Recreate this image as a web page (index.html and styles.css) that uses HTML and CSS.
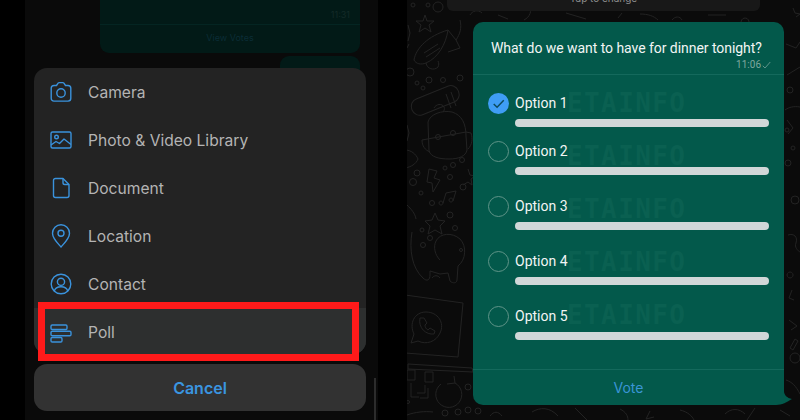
FILE: index.html
```html
<!DOCTYPE html>
<html lang="en">
<head>
    <meta charset="UTF-8">
    <meta name="viewport" content="width=device-width, initial-scale=1.0">
    <title>WhatsApp Polls</title>
    <link rel="stylesheet" href="styles.css">
</head>
<body>
    <div class="screen screen-left">
        <div class="dim-bubble">
            <div class="dim-time">11:31</div>
            <div class="dim-votes">View Votes</div>
        </div>
        <div class="dim-bubble-small"></div>

        <div class="sheet">
            <div class="sheet-row">
                <svg class="row-icon" viewBox="0 0 24 24"><path d="M5 5.500h2.500l1.600-2.300c.3-.4.6-.6 1.100-.6h3.600c.5 0 .8.2 1.100.6l1.600 2.300H19c1.700 0 2.800 1.100 2.800 2.800v10c0 1.700-1.100 2.800-2.800 2.800H5c-1.700 0-2.800-1.100-2.800-2.800v-10C2.200 6.600 3.300 5.500 5 5.500z"/><circle cx="12" cy="13" r="4.200"/></svg>
                <span>Camera</span>
            </div>
            <div class="sheet-row">
                <svg class="row-icon" viewBox="0 0 24 24"><rect x="2" y="4" width="20" height="16" rx="1.500"/><circle cx="7.500" cy="9" r="1.800"/><path d="M2 17l5-3.500 3.500 2 4.500-4.500 7 5.500"/></svg>
                <span>Photo &amp; Video Library</span>
            </div>
            <div class="sheet-row">
                <svg class="row-icon" viewBox="0 0 24 24"><path d="M6.500 2.500h7.500l6 6v11c0 1.300-.8 2-2 2H6.500c-1.200 0-2-.7-2-2v-15c0-1.300.8-2 2-2z"/><path d="M14 2.500v4.200c0 1.200.6 1.800 1.800 1.800H20"/></svg>
                <span>Document</span>
            </div>
            <div class="sheet-row">
                <svg class="row-icon" viewBox="0 0 24 24"><path d="M12 23c-1.200-1.700-8.500-8-8.500-13.800a8.500 8.500 0 0 1 17 0C20.500 15 13.200 21.300 12 23z"/><circle cx="12" cy="9.200" r="3"/></svg>
                <span>Location</span>
            </div>
            <div class="sheet-row">
                <svg class="row-icon" viewBox="0 0 24 24"><circle cx="12" cy="12" r="9.800"/><circle cx="12" cy="9.800" r="3.600"/><path d="M5.300 19c.8-3 3.500-4.200 6.700-4.200s5.900 1.200 6.700 4.200"/></svg>
                <span>Contact</span>
            </div>
            <div class="sheet-row sheet-row-poll">
                <svg class="row-icon" viewBox="0 0 24 24"><rect x="2" y="4" width="16" height="4.500" rx="1.200"/><rect x="2" y="10.200" width="20" height="4.500" rx="1.200"/><rect x="2" y="16.500" width="11" height="4.500" rx="1.200"/></svg>
                <span>Poll</span>
            </div>
        </div>
        <div class="poll-highlight"></div>

        <div class="cancel">Cancel</div>
        <div class="scroll-thumb"></div>
    </div>

    <div class="screen screen-right">
        <svg class="wallpaper" viewBox="407 0 393 420">
            <!-- left column, top: star, cap, dots -->
            <path d="M425 15l2 6 7 0-5 4 2 7-6-4-6 4 2-7-5-4 7 0z"/>
            <circle cx="438" cy="7" r="5"/><circle cx="413" cy="5" r="2"/><circle cx="428" cy="5" r="2"/>
            <path d="M414 60c2-12 14-24 34-30-2 14-10 28-22 33-5 2-10 1-12-3z"/>
            <path d="M424 53l14-9M426 57l14-9"/>
            <path d="M426 63c1 6 8 8 12 4 1-2 1-4 0-6"/>
            <path d="M448 30l8 10 4 8-12 4M460 20c2 8 0 14-4 20"/>
            <circle cx="410" cy="72" r="4"/><circle cx="417" cy="83" r="2"/><circle cx="429" cy="80" r="3"/>
            <circle cx="423" cy="88" r="2"/><circle cx="443" cy="80" r="2.500"/><circle cx="460" cy="78" r="3"/>
            <path d="M408 25l2 8-2 8M409 44l-2 4"/>
            <!-- rolled mat and backpack -->
            <rect x="410" y="92" width="50" height="17" rx="8" transform="rotate(-22 435 100)"/>
            <path d="M451 92l5 14M446 94l5 14"/>
            <path d="M428 122c2-8 14-12 24-10 10 3 14 12 14 24l1 14c-1 6-8 9-18 9-10 0-18-2-20-8z"/>
            <path d="M422 140l44-8 5 1c2 6 1 12-3 16M422 140c0 6 3 10 8 12"/>
            <circle cx="438" cy="137" r="2.500"/><circle cx="453" cy="133" r="2.500"/>
            <path d="M434 108c2-4 8-5 10-1 1 2 0 4-1 5"/>
            <path d="M405 150c6 0 11 4 13 9-2 5-7 8-13 9M407 125l2 8-2 8"/>
            <!-- bolt, note, dots -->
            <path d="M429 169l8 2-3 7 6 2-7 12-1-9-5-1z"/>
            <path d="M443 203l3-10 10-2-3 10M443 203a2 2 0 1 0 0 .1M453 200a2 2 0 1 0 0 .1"/>
            <circle cx="417" cy="173" r="3"/><circle cx="413" cy="182" r="3.500"/><circle cx="421" cy="193" r="2"/>
            <circle cx="432" cy="203" r="2.500"/><circle cx="445" cy="168" r="2"/><circle cx="453" cy="165" r="2.500"/>
            <circle cx="450" cy="177" r="2.500"/><circle cx="462" cy="160" r="2.500"/><circle cx="463" cy="187" r="3"/>
            <path d="M468 169l2 6 5 1-4 3 1 6-4-3-5 3"/>
            <path d="M407 205c4 4 8 8 9 14"/>
            <!-- star, elephant -->
            <path d="M435 213l3 7 7 1-5 5 2 8-7-4-7 4 2-8-5-5 7-1z"/>
            <circle cx="450" cy="215" r="3"/><circle cx="455" cy="228" r="2.500"/><circle cx="422" cy="230" r="2"/>
            <circle cx="430" cy="238" r="2.500"/><circle cx="423" cy="245" r="2.500"/>
            <path d="M412 232c-3 18 0 36 11 46 4 4 7 2 7-3l0-4 10 3 8-1 2 8c3 3 7 2 7-1l1-14c8-6 9-20 2-27-8-7-20-6-24 2-3 6-1 14 4 19"/>
            <circle cx="461" cy="250" r="1.500"/>
            <path d="M432 278c2-3 6-3 8 0"/>
            <!-- laptop with chat icon -->
            <path d="M405 295l58 8-5 54-53-4"/>
            <path d="M408 364l64 4 1 4-65-3z"/>
            <path d="M411 343l3-9c-5-10 0-22 12-22 12 0 19 11 14 21-4 9-14 12-22 8z"/>
            <path d="M420 318c-2 10 6 17 14 16l1-3-5-3-2 2c-2-1-3-3-3-5l2-2-3-5z"/>
            <!-- squares, refresh, bottom edge -->
            <path d="M407 370h8v10h-8zM425 372h8v10h-8zM411 383v14h8M417 393h8v-8M428 388v10h-8"/>
            <path d="M441 384a13 13 0 1 0 14-1l-1-7m1 7l-8 1"/>
            <circle cx="445" cy="413" r="3"/><circle cx="458" cy="412" r="3"/><circle cx="468" cy="410" r="3"/>
            <circle cx="478" cy="411" r="3"/><circle cx="468" cy="387" r="3"/><circle cx="408" cy="402" r="1.500"/>
            <path d="M407 415c8-3 18-4 26-3"/>
            <path d="M490 416c4-5 8-5 12 0M532 412c8-5 18-5 26 4M575 408l12 12M620 409c6 3 8 7 8 11M650 411l-4 8 8-2M680 410c8 2 12 6 14 10M725 414c6-6 14-6 20 0M755 408l-8 12"/>
            <!-- above the bubble -->
            <path d="M470 15c2-4 8-6 12-2M498 15l10 4M530 5c2 6 0 12-6 15M566 13l20 6M618 18l4-5M640 14c8 0 14 2 18 6M672 20c3-4 8-4 10 0M708 15h18M745 18a4 4 0 1 0 .1 0"/>
            <!-- right column -->
            <path d="M793 8l2 5 5 1-4 3M786 44l10 4 4-6M787 75l13-8M785 110c4-3 9-4 15-3M787 120l6 8-5 6"/>
            <circle cx="790" cy="90" r="3"/><circle cx="787" cy="130" r="2"/><circle cx="788" cy="163" r="3"/>
            <circle cx="795" cy="200" r="4"/><circle cx="793" cy="148" r="2"/>
            <path d="M788 235c6-2 10 2 8 8-2 4 2 8 4 9M790 272a3 3 0 1 0 .1 0M792 290l-3 8 5 2M789 320l8 6-6 4"/>
            <path d="M790 348l5-9 3 2-5 9z"/><circle cx="795" cy="358" r="5"/><path d="M786 380c6 2 10 6 14 14M780 410l10 6"/>
        </svg>

        <div class="tap-strip"><span>Tap to change</span></div>

        <div class="poll-bubble">
            <div class="poll-head">
                <div class="question">What do we want to have for dinner tonight?</div>
                <div class="sent">
                    <span>11:06</span>
                    <svg class="sent-check" viewBox="0 0 12 10"><path d="M1 6l3 3 7-8"/></svg>
                </div>
            </div>
            <div class="marks">
                <span class="mark">ETAINFO</span>
                <span class="mark">ETAINFO</span>
                <span class="mark">ETAINFO</span>
                <span class="mark">ETAINFO</span>
                <span class="mark">ETAINFO</span>
            </div>
            <div class="options">
                <div class="option option-first">
                    <span class="radio radio-on">
                        <svg viewBox="0 0 22 22"><path d="M6 11.500l3.500 3.500 7-7.500"/></svg>
                    </span>
                    <div class="option-body">
                        <div class="option-label">Option 1</div>
                        <div class="option-bar"></div>
                    </div>
                </div>
                <div class="option option-tight">
                    <span class="radio"></span>
                    <div class="option-body">
                        <div class="option-label">Option 2</div>
                        <div class="option-bar"></div>
                    </div>
                </div>
                <div class="option">
                    <span class="radio"></span>
                    <div class="option-body">
                        <div class="option-label">Option 3</div>
                        <div class="option-bar"></div>
                    </div>
                </div>
                <div class="option">
                    <span class="radio"></span>
                    <div class="option-body">
                        <div class="option-label">Option 4</div>
                        <div class="option-bar"></div>
                    </div>
                </div>
                <div class="option">
                    <span class="radio"></span>
                    <div class="option-body">
                        <div class="option-label">Option 5</div>
                        <div class="option-bar"></div>
                    </div>
                </div>
            </div>
            <div class="vote">Vote</div>
            <svg class="bubble-tail" viewBox="0 0 20 20"><path d="M0 0h12v6c0 4 3 7 8 8-5 3-10 6-16 6H0z"/></svg>
        </div>
    </div>
</body>
</html>
```

FILE: styles.css
```css
* {
    box-sizing: border-box;
}
html, body {
    margin: 0;
    height: 100%;
}
body {
    width: 800px;
    height: 420px;
    overflow: hidden;
    display: flex;
    background-color: #000;
    font-family: Inter, "Liberation Sans", sans-serif;
}
.screen {
    position: relative;
    height: 420px;
    overflow: hidden;
}

/* left phone */
.screen-left {
    width: 353px;
    margin-left: 25px;
    background-color: #0a0a0a;
    padding-left: 9px;
}
.dim-bubble {
    width: 260px;
    height: 53px;
    margin-left: 66px;
    padding: 9px 10px 0;
    background-color: #021a17;
    border-radius: 0 0 9px 9px;
    color: #0c2c31;
    font-size: 9px;
}
.dim-time {
    text-align: right;
    color: #142a28;
    height: 15px;
}
.dim-votes {
    border-top: 1px solid #042522;
    margin: 0 -10px;
    padding-top: 7px;
    text-align: center;
    color: #0b2d36;
}
.dim-bubble-small {
    width: 80px;
    height: 20px;
    margin: 3px 0 -8px 246px;
    background-color: #021a17;
    border-radius: 9px 9px 0 0;
}
.sheet {
    width: 332px;
    height: 286px;
    background-color: #232323;
    border-radius: 13px;
    overflow: hidden;
    position: relative;
}
.sheet-row {
    height: 48.100px;
    display: flex;
    align-items: center;
    padding-left: 15px;
    color: #b4b4b4;
    font-size: 15.600px;
}
.sheet-row-poll {
    background-color: #2d2f2f;
}
.row-icon {
    width: 24px;
    height: 24px;
    margin-right: 15px;
    fill: none;
    stroke: #3a92dc;
    stroke-width: 1.400;
    stroke-linejoin: round;
}
.poll-highlight {
    position: absolute;
    left: 13px;
    top: 302px;
    width: 321px;
    height: 59px;
    border: 7px solid #ff1a1a;
}
.cancel {
    width: 332px;
    height: 47px;
    margin-top: 10px;
    background-color: #323232;
    border-radius: 13px;
    color: #3a95e0;
    font-size: 16px;
    font-weight: 600;
    display: flex;
    align-items: center;
    justify-content: center;
}
.scroll-thumb {
    position: absolute;
    right: 2px;
    top: 378px;
    width: 2px;
    height: 42px;
    background-color: #2c2c2c;
}

/* right phone */
.screen-right {
    width: 393px;
    margin-left: 29px;
    background-color: #0b0b0b;
}
.wallpaper {
    position: absolute;
    left: 0;
    top: 0;
    width: 393px;
    height: 420px;
    fill: none;
    stroke: #232323;
    stroke-width: 1;
}
.tap-strip {
    position: relative;
    width: 313px;
    height: 11px;
    margin-left: 40px;
    background-color: #181818;
    border-radius: 0 0 6px 6px;
    color: #8f8f8f;
    font-size: 10px;
    line-height: 1;
    text-align: center;
    overflow: hidden;
}
.tap-strip span {
    display: block;
    margin-top: -7px;
}
.poll-bubble {
    position: relative;
    width: 311px;
    height: 383px;
    margin: 11px 0 0 66px;
    background-color: #03594b;
    border-radius: 10px;
    color: #f2f5f4;
    font-family: Roboto, "Liberation Sans", sans-serif;
    display: flex;
    flex-direction: column;
}
.poll-head {
    height: 53px;
    padding: 16px 13px 0 18px;
    border-bottom: 1px solid #14695c;
}
.question {
    font-size: 14px;
    line-height: 20px;
    letter-spacing: -.05px;
    white-space: nowrap;
}
.sent {
    display: flex;
    justify-content: flex-end;
    align-items: center;
    gap: 1px;
    margin-top: 1px;
    font-size: 10px;
    color: #7fa89f;
}
.sent-check {
    width: 9px;
    height: 8px;
    fill: none;
    stroke: #7fa89f;
}

/* watermark sits behind the options */
.marks {
    position: absolute;
    left: 94px;
    top: 68px;
    display: flex;
    flex-direction: column;
    gap: 27px;
}
.mark {
    font-family: "DejaVu Sans Mono", monospace;
    font-size: 26px;
    font-weight: 700;
    line-height: 26px;
    letter-spacing: 1.400px;
    color: #0a6051;
    white-space: nowrap;
}
.options {
    position: relative;
    flex: 1;
    padding: 0 15px;
}
.option {
    display: flex;
    margin-top: 19px;
    height: 36px;
}
.option-first {
    margin-top: 18px;
}
.option-tight {
    margin-top: 12px;
}
.radio {
    width: 21px;
    height: 21px;
    flex-shrink: 0;
    border: 1px solid #5f9488;
    border-radius: 50%;
}
.radio-on {
    background-color: #3f9df5;
    border: none;
}
.radio-on svg {
    display: block;
    fill: none;
    stroke: #0c4a5a;
    stroke-width: 1.500;
}
.option-body {
    flex: 1;
    margin-left: 6px;
}
.option-label {
    font-size: 14px;
    line-height: 20px;
}
.option-bar {
    height: 8px;
    margin-top: 6px;
    background-color: #d1d7d8;
    border-radius: 4px;
}
.vote {
    height: 36px;
    border-top: 1px solid #14695c;
    color: #3a95d5;
    font-family: Inter, "Liberation Sans", sans-serif;
    font-size: 14px;
    display: flex;
    align-items: center;
    justify-content: center;
}
.bubble-tail {
    position: absolute;
    right: -8px;
    bottom: 0;
    width: 20px;
    height: 20px;
    fill: #03594b;
}
```
